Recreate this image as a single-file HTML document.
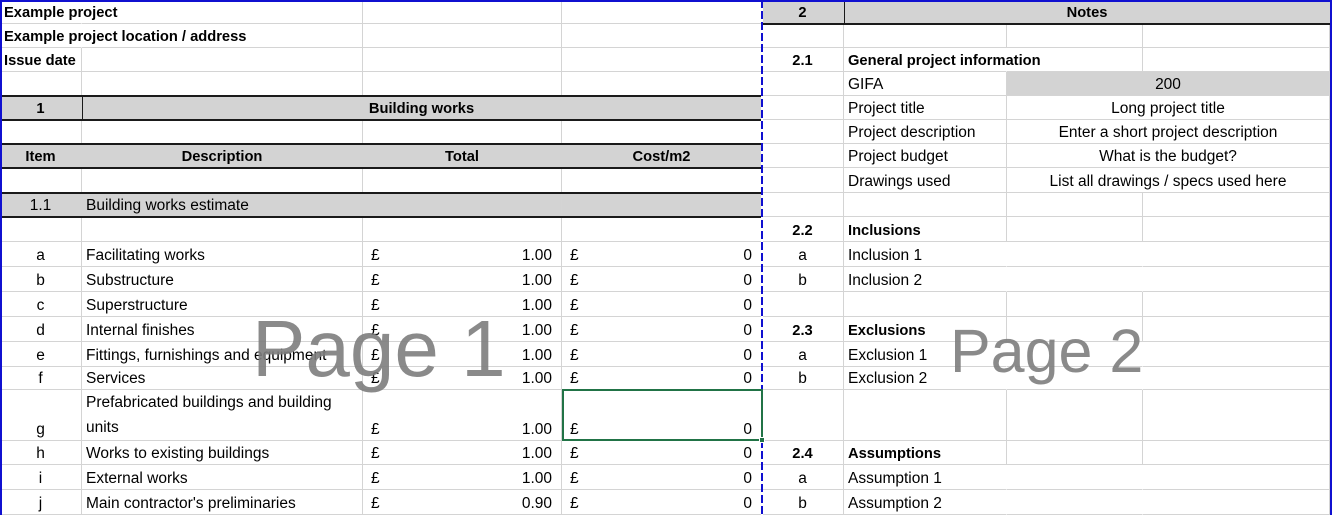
<!DOCTYPE html>
<html><head><meta charset="utf-8">
<style>
*{box-sizing:border-box;margin:0;padding:0}
body{width:1333px;height:515px;overflow:hidden;background:#fff;font-family:"Liberation Sans",Arial,sans-serif;font-size:15.5px;color:#000;position:relative}
.row{display:flex;position:relative}
.c{height:100%;border-right:1px solid #d4d4d4;border-bottom:1px solid #d4d4d4;display:flex;align-items:flex-end;padding:0 4px 1px 4px;white-space:nowrap;overflow:visible;position:relative}
.n{border-right-color:transparent}
.g{background:#d3d3d3}
.gn{background:#d3d3d3;border-right-color:#d3d3d3}
.b{font-weight:bold;font-size:14.7px;padding-bottom:2px}
.ctr{justify-content:center}
.A{width:82px}.B{width:281px}.C{width:199px}.D{width:200px}
.E{width:82px}.F{width:163px}.G{width:136px}.H{width:187px}.GH{width:323px}
.mon{justify-content:space-between;padding-left:8px;padding-right:9px}
.ov{z-index:2}
.line{position:absolute;background:#1a1a1a;z-index:3}
.wm{position:absolute;color:rgba(125,125,125,0.9);line-height:1;z-index:4;white-space:nowrap;font-family:"Liberation Sans",Arial,sans-serif}
</style></head><body>

<div class="row" style="height:24px"><div class="c A n b ov">Example project</div><div class="c B"></div><div class="c C"></div><div class="c D"></div><div class="c E g b ctr">2</div><div class="c GH g b ctr" style="width:486px;border-right:none">Notes</div></div>
<div class="row" style="height:24px"><div class="c A n b ov">Example project location / address</div><div class="c B"></div><div class="c C"></div><div class="c D"></div><div class="c E"></div><div class="c F"></div><div class="c G"></div><div class="c H"></div></div>
<div class="row" style="height:24px"><div class="c A b">Issue date</div><div class="c B"></div><div class="c C"></div><div class="c D"></div><div class="c E b ctr">2.1</div><div class="c F n b ov">General project information</div><div class="c G"></div><div class="c H"></div></div>
<div class="row" style="height:24px"><div class="c A"></div><div class="c B"></div><div class="c C"></div><div class="c D"></div><div class="c E"></div><div class="c F">GIFA</div><div class="c GH g ctr">200</div></div>
<div class="row" style="height:24px"><div class="c A g b ctr">1</div><div class="c g b ctr" style="width:680px">Building works</div><div class="c E"></div><div class="c F">Project title</div><div class="c GH ctr">Long project title</div></div>
<div class="row" style="height:24px"><div class="c A"></div><div class="c B"></div><div class="c C"></div><div class="c D"></div><div class="c E"></div><div class="c F">Project description</div><div class="c GH ctr">Enter a short project description</div></div>
<div class="row" style="height:24px"><div class="c A gn b ctr">Item</div><div class="c B gn b ctr">Description</div><div class="c C gn b ctr">Total</div><div class="c D g b ctr">Cost/m2</div><div class="c E"></div><div class="c F">Project budget</div><div class="c GH ctr">What is the budget?</div></div>
<div class="row" style="height:25px"><div class="c A"></div><div class="c B"></div><div class="c C"></div><div class="c D"></div><div class="c E"></div><div class="c F">Drawings used</div><div class="c GH ctr">List all drawings / specs used here</div></div>
<div class="row" style="height:24px"><div class="c A gn ctr">1.1</div><div class="c B gn">Building works estimate</div><div class="c C g"></div><div class="c D g"></div><div class="c E"></div><div class="c F"></div><div class="c G"></div><div class="c H"></div></div>
<div class="row" style="height:25px"><div class="c A"></div><div class="c B"></div><div class="c C"></div><div class="c D"></div><div class="c E b ctr">2.2</div><div class="c F b">Inclusions</div><div class="c G"></div><div class="c H"></div></div>

<div class="row" style="height:25px"><div class="c A ctr">a</div><div class="c B">Facilitating works</div><div class="c C mon"><span>£</span><span>1.00</span></div><div class="c D mon"><span>£</span><span>0</span></div><div class="c E ctr">a</div><div class="c F n ov">Inclusion 1</div><div class="c G n"></div><div class="c H"></div></div>
<div class="row" style="height:25px"><div class="c A ctr">b</div><div class="c B">Substructure</div><div class="c C mon"><span>£</span><span>1.00</span></div><div class="c D mon"><span>£</span><span>0</span></div><div class="c E ctr">b</div><div class="c F n ov">Inclusion 2</div><div class="c G n"></div><div class="c H"></div></div>
<div class="row" style="height:25px"><div class="c A ctr">c</div><div class="c B">Superstructure</div><div class="c C mon"><span>£</span><span>1.00</span></div><div class="c D mon"><span>£</span><span>0</span></div><div class="c E"></div><div class="c F"></div><div class="c G"></div><div class="c H"></div></div>
<div class="row" style="height:25px"><div class="c A ctr">d</div><div class="c B">Internal finishes</div><div class="c C mon"><span>£</span><span>1.00</span></div><div class="c D mon"><span>£</span><span>0</span></div><div class="c E b ctr">2.3</div><div class="c F b">Exclusions</div><div class="c G"></div><div class="c H"></div></div>
<div class="row" style="height:25px"><div class="c A ctr">e</div><div class="c B">Fittings, furnishings and equipment</div><div class="c C mon"><span>£</span><span>1.00</span></div><div class="c D mon"><span>£</span><span>0</span></div><div class="c E ctr">a</div><div class="c F n ov">Exclusion 1</div><div class="c G n"></div><div class="c H"></div></div>
<div class="row" style="height:23px"><div class="c A ctr">f</div><div class="c B">Services</div><div class="c C mon"><span>£</span><span>1.00</span></div><div class="c D mon"><span>£</span><span>0</span></div><div class="c E ctr">b</div><div class="c F n ov">Exclusion 2</div><div class="c G n"></div><div class="c H"></div></div>
<div class="row" style="height:51px"><div class="c A ctr">g</div><div class="c B" style="line-height:25px;padding-bottom:0"><div>Prefabricated buildings and building<br>units</div></div><div class="c C mon"><span>£</span><span>1.00</span></div><div class="c D mon"><span>£</span><span>0</span></div><div class="c E"></div><div class="c F"></div><div class="c G"></div><div class="c H"></div></div>
<div class="row" style="height:24px"><div class="c A ctr">h</div><div class="c B">Works to existing buildings</div><div class="c C mon"><span>£</span><span>1.00</span></div><div class="c D mon"><span>£</span><span>0</span></div><div class="c E b ctr">2.4</div><div class="c F b">Assumptions</div><div class="c G"></div><div class="c H"></div></div>
<div class="row" style="height:25px"><div class="c A ctr">i</div><div class="c B">External works</div><div class="c C mon"><span>£</span><span>1.00</span></div><div class="c D mon"><span>£</span><span>0</span></div><div class="c E ctr">a</div><div class="c F n ov">Assumption 1</div><div class="c G n"></div><div class="c H"></div></div>
<div class="row" style="height:25px"><div class="c A ctr">j</div><div class="c B">Main contractor's preliminaries</div><div class="c C mon"><span>£</span><span>0.90</span></div><div class="c D mon"><span>£</span><span>0</span></div><div class="c E ctr">b</div><div class="c F n ov">Assumption 2</div><div class="c G n"></div><div class="c H"></div></div>

<div class="line" style="left:0;top:95px;width:762px;height:1.5px"></div>
<div class="line" style="left:0;top:119px;width:762px;height:1.5px"></div>
<div class="line" style="left:0;top:143px;width:762px;height:1.5px"></div>
<div class="line" style="left:0;top:167px;width:762px;height:1.5px"></div>
<div class="line" style="left:0;top:192px;width:762px;height:1.5px"></div>
<div class="line" style="left:0;top:216px;width:762px;height:1.5px"></div>
<div class="line" style="left:81.5px;top:96px;width:1.5px;height:24px"></div>
<div class="line" style="left:762px;top:23px;width:568px;height:1.5px"></div>
<div class="line" style="left:843.5px;top:0;width:1.5px;height:24px"></div>

<div style="position:absolute;left:562px;top:389px;width:201px;height:52px;border:2px solid #217346;z-index:5"></div>
<div style="position:absolute;left:759px;top:437px;width:6px;height:6px;background:#217346;border:1px solid #fff;z-index:6"></div>

<div style="position:absolute;left:0;top:0;width:2px;height:515px;background:#1010d0;z-index:7"></div>
<div style="position:absolute;left:0;top:0;width:1331px;height:2px;background:#1010d0;z-index:7"></div>
<div style="position:absolute;left:1330px;top:0;width:2px;height:515px;background:#1010d0;z-index:7"></div>
<div style="position:absolute;left:761px;top:0;width:2px;height:515px;background:repeating-linear-gradient(to bottom,#1010d0 0 8px,#fff 8px 11px);z-index:4"></div>

<div class="wm" style="left:252px;top:309px;font-size:80px">Page 1</div>
<div class="wm" style="left:950px;top:321px;font-size:61px">Page 2</div>
</body></html>
